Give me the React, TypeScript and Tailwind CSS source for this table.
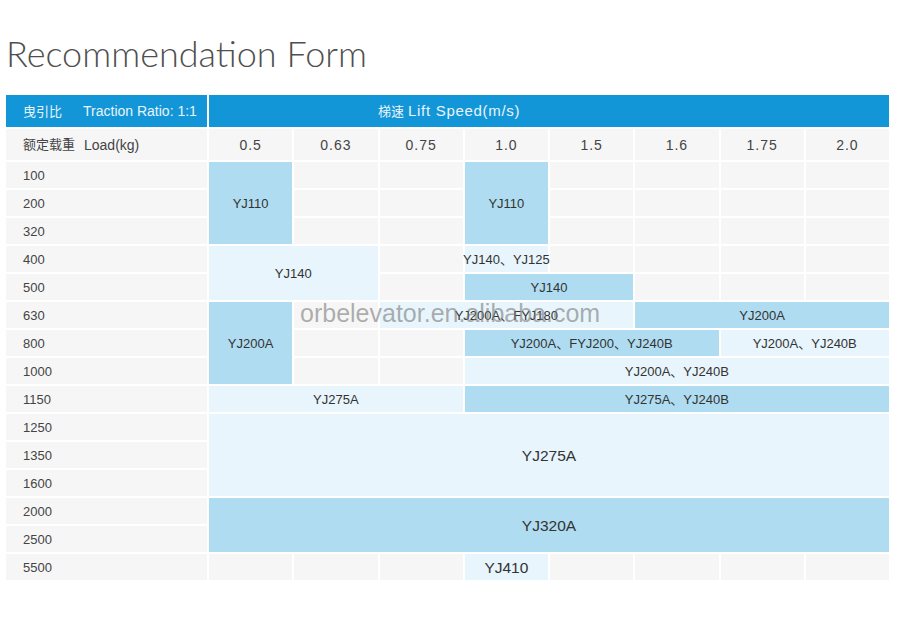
const colStart = ['', 'col-start-1', 'col-start-2', 'col-start-3', 'col-start-4', 'col-start-5', 'col-start-6', 'col-start-7', 'col-start-8', 'col-start-9']
const colSpan = ['', 'col-span-1', 'col-span-2', 'col-span-3', 'col-span-4', 'col-span-5', 'col-span-6', 'col-span-7', 'col-span-8']
const rowStart = ['', 'row-start-1', 'row-start-2', 'row-start-3', 'row-start-4', 'row-start-5', 'row-start-6', 'row-start-7', 'row-start-8', 'row-start-9', 'row-start-10', 'row-start-11', 'row-start-12', 'row-start-13', 'row-start-14', 'row-start-15', 'row-start-16', 'row-start-17']
const rowSpan = ['', 'row-span-1', 'row-span-2', 'row-span-3']

const speeds = ['0.5', '0.63', '0.75', '1.0', '1.5', '1.6', '1.75', '2.0']
const loads = ['100', '200', '320', '400', '500', '630', '800', '1000', '1150', '1250', '1350', '1600', '2000', '2500', '5500']

type Block = { text: string; col: number; row: number; cs?: number; rs?: number; dark?: boolean; big?: boolean }

// col 2..9 = speed columns, row 3..17 = load rows
const blocks: Block[] = [
  { text: 'YJ110', col: 2, row: 3, rs: 3, dark: true },
  { text: 'YJ110', col: 5, row: 3, rs: 3, dark: true },
  { text: 'YJ140', col: 2, row: 6, cs: 2, rs: 2 },
  { text: 'YJ140、YJ125', col: 5, row: 6 },
  { text: 'YJ140', col: 5, row: 7, cs: 2, dark: true },
  { text: 'YJ200A', col: 2, row: 8, rs: 3, dark: true },
  { text: 'YJ200A、FYJ180', col: 4, row: 8, cs: 3 },
  { text: 'YJ200A', col: 7, row: 8, cs: 3, dark: true },
  { text: 'YJ200A、FYJ200、YJ240B', col: 5, row: 9, cs: 3, dark: true },
  { text: 'YJ200A、YJ240B', col: 8, row: 9, cs: 2 },
  { text: 'YJ200A、YJ240B', col: 5, row: 10, cs: 5 },
  { text: 'YJ275A', col: 2, row: 11, cs: 3 },
  { text: 'YJ275A、YJ240B', col: 5, row: 11, cs: 5, dark: true },
  { text: 'YJ275A', col: 2, row: 12, cs: 8, rs: 3, big: true },
  { text: 'YJ320A', col: 2, row: 15, cs: 8, rs: 2, dark: true, big: true },
  { text: 'YJ410', col: 5, row: 17, big: true },
]

function emptyCells() {
  const taken = new Set<string>()
  blocks.forEach((b) => {
    for (let c = b.col; c < b.col + (b.cs ?? 1); c++)
      for (let r = b.row; r < b.row + (b.rs ?? 1); r++) taken.add(c + ':' + r)
  })
  const out: { col: number; row: number }[] = []
  for (let r = 3; r <= 17; r++)
    for (let c = 2; c <= 9; c++) if (!taken.has(c + ':' + r)) out.push({ col: c, row: r })
  return out
}

export default function App() {
  return (
    <div className="relative w-[900px] h-[620px] bg-white overflow-hidden font-['Liberation_Sans','Noto_Sans_CJK_SC',sans-serif]">
      <h1 className="pl-[6px] pt-[31px] h-[95px] font-['Lato','Liberation_Sans',sans-serif] font-light text-[36px] leading-[44px] text-[#4f4f4f]">
        Recommendation Form
      </h1>

      <div className="ml-[6px] w-[883px] grid grid-cols-[201px_repeat(8,minmax(0,1fr))] grid-rows-[32px_31px_repeat(15,26px)] gap-[2px] text-[13px] text-[#333]">
        <div className="col-start-1 row-start-1 bg-[#1396d7] flex items-center pt-px pl-[17px] text-[#e8f4fb]">
          <span>曳引比</span>
          <span className="ml-[21px] text-[14px]">Traction Ratio: 1:1</span>
        </div>
        <div className="col-start-2 col-span-8 row-start-1 bg-[#1396d7] flex items-center pt-px pl-[169px] text-[#e8f4fb]">
          <span>梯速</span>
          <span className="ml-[4px] text-[15px] tracking-[0.7px]">Lift Speed(m/s)</span>
        </div>

        <div className="col-start-1 row-start-2 bg-[#f6f6f6] flex items-center pt-px pl-[17px] text-[#444]">
          <span>额定载重</span>
          <span className="ml-[9px] text-[14px]">Load(kg)</span>
        </div>
        {speeds.map((s, i) => (
          <div
            key={s}
            className={`${colStart[i + 2]} row-start-2 bg-[#f6f6f6] flex items-center justify-center pt-px text-[14px] tracking-[1px] text-[#444]`}
          >
            {s}
          </div>
        ))}

        {loads.map((l, i) => (
          <div key={l} className={`col-start-1 ${rowStart[i + 3]} bg-[#f6f6f6] flex items-center pt-[2px] pl-[17px] text-[#444]`}>
            {l}
          </div>
        ))}

        {emptyCells().map((e) => (
          <div key={e.col + '-' + e.row} className={`${colStart[e.col]} ${rowStart[e.row]} bg-[#f6f6f6]`} />
        ))}

        {blocks.map((b, i) => (
          <div
            key={i}
            className={`${colStart[b.col]} ${colSpan[b.cs ?? 1]} ${rowStart[b.row]} ${rowSpan[b.rs ?? 1]} ${b.dark ? 'bg-[#afdcf0]' : 'bg-[#e8f5fc]'} ${b.big ? 'text-[15.5px]' : ''} flex items-center justify-center pt-px whitespace-nowrap`}
          >
            {b.text}
          </div>
        ))}
      </div>

      <div className="absolute left-[300px] top-[298px] text-[25px] leading-[30px] text-[#7a7a7a]/60 pointer-events-none">
        orbelevator.en.alibaba.com
      </div>
    </div>
  )
}
